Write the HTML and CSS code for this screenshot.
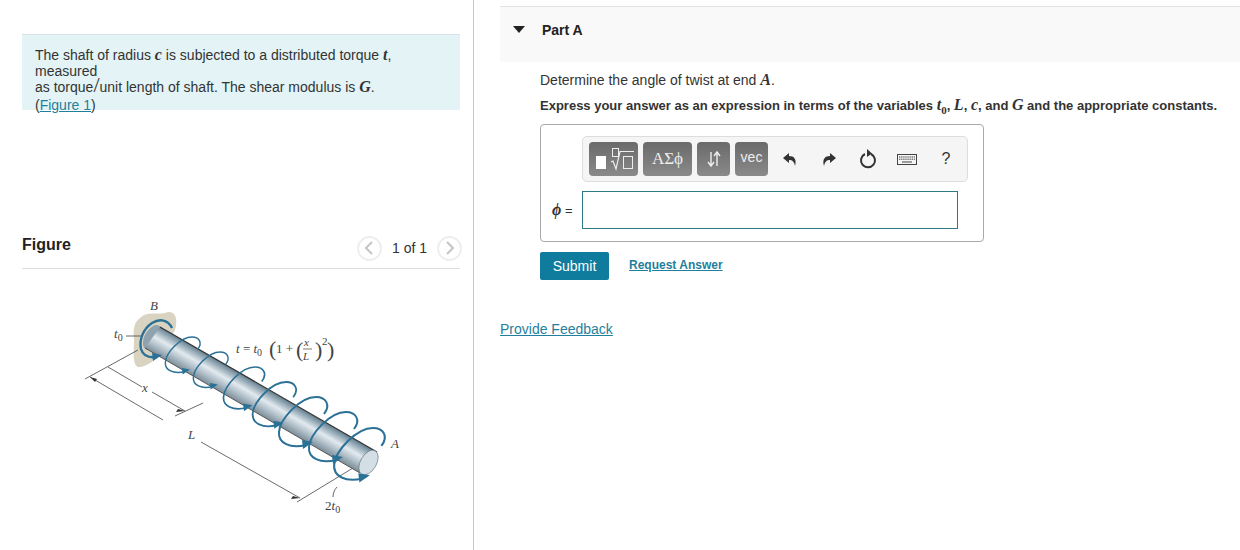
FILE: index.html
```html
<!DOCTYPE html>
<html lang="en">
<head>
    <meta charset="UTF-8">
    <meta name="viewport" content="width=device-width, initial-scale=1.0">
    <title>Part A - Angle of Twist</title>
    <link rel="stylesheet" href="styles.css">
</head>
<body>

    <div class="left-pane">
        <div class="intro">
            The shaft of radius <span class="math">c</span> is subjected to a distributed torque <span class="math">t</span>, measured<br>
            as torque<span class="slash">/</span>unit length of shaft. The shear modulus is <span class="math">G</span>.
            <div class="figure-ref">(<a href="#">Figure 1</a>)</div>
        </div>

        <div class="figure-head">
            <h2>Figure</h2>
            <div class="pager">
                <span class="pager-btn">
                    <svg width="10" height="14" viewBox="0 0 10 14"><path d="M8 1 L2 7 L8 13" fill="none" stroke="#c4c4c4" stroke-width="2"/></svg>
                </span>
                <span class="pager-text">1 of 1</span>
                <span class="pager-btn">
                    <svg width="10" height="14" viewBox="0 0 10 14"><path d="M2 1 L8 7 L2 13" fill="none" stroke="#c4c4c4" stroke-width="2"/></svg>
                </span>
            </div>
        </div>

        <svg class="shaft-figure" width="340" height="230" viewBox="70 290 340 230">
            <defs>
                <linearGradient id="shaftFill" gradientUnits="userSpaceOnUse" x1="160" y1="327" x2="147.5" y2="348.6">
                    <stop offset="0" stop-color="#66808f"/>
                    <stop offset="0.15" stop-color="#90a5b2"/>
                    <stop offset="0.45" stop-color="#e2eaef"/>
                    <stop offset="0.75" stop-color="#aebdc7"/>
                    <stop offset="1" stop-color="#82949f"/>
                </linearGradient>
                <g id="ring">
                    <path d="M8 17 C15 8 10 0 0 0 C-16 0 -36 22 -37 35 C-38 46 -26 52 -10 48" fill="none" stroke="#2b7196" stroke-width="2"/>
                    <polygon points="-3,45 -14,43 -13,52" fill="#2b7196"/>
                </g>
            </defs>

            <path d="M140 318 C148 310 160 316 168 312 C176 311 178 320 175 330 L162 352 C158 358 146 368 138 367 C132 364 134 350 134 340 C133 330 134 322 140 318 Z" fill="#d9d3c2"/>

            <!-- dimension lines -->
            <g fill="none" stroke="#444" stroke-width="0.8">
                <path d="M138 350 L85 379"/>
                <path d="M108 367 L142 387 M152 392 L185 411"/>
                <path d="M175 416 L203 403"/>
                <path d="M90 377 L163 420 M201 442 L300 498"/>
                <path d="M297 502 L353 468"/>
                <path d="M337 487 C334 490 333 494 333 497"/>
                <path d="M126 336 L141 336"/>
            </g>
            <polygon points="185,411 178,409 176,412" fill="#333"/>
            <polygon points="90,377 97,379 95,382" fill="#333"/>
            <polygon points="300,498 293,496 291,499" fill="#333"/>

            <!-- shaft -->
            <ellipse cx="152.5" cy="337.5" rx="8" ry="13.5" transform="rotate(30 152.5 337.5)" fill="#8fa3af"/>
            <polygon points="160,327 377,452 360,473 145,348" fill="url(#shaftFill)"/>
            <path d="M160 327 L377 452" stroke="#333" stroke-width="1.2"/>
            <path d="M145 348 L360 473" stroke="#555" stroke-width="1"/>
            <ellipse cx="368.5" cy="462.5" rx="8" ry="13.5" transform="rotate(30 368.5 462.5)" fill="#d3dee5" stroke="#5d6d77" stroke-width="0.6"/>

            <!-- torque rings -->
            <path d="M172 328 C168 320 160 318 152 323 C143 329 139 340 141 349 C143 356 149 358 157 357" fill="none" stroke="#2b7196" stroke-width="2.4"/>
            <polygon points="162,355 152,353 153,361" fill="#2b7196"/>
            <use href="#ring" transform="translate(192 337) scale(.72)"/>
            <use href="#ring" transform="translate(220 352) scale(.72)"/>
            <use href="#ring" transform="translate(255 367) scale(.85)"/>
            <use href="#ring" transform="translate(286 382) scale(.9)"/>
            <use href="#ring" transform="translate(316 397)"/>
            <use href="#ring" transform="translate(346 412)"/>
            <use href="#ring" transform="translate(373 428) scale(1.05)"/>

            <!-- labels -->
            <g class="fig-label">
                <text x="150" y="310">B</text>
                <text x="114" y="338">t<tspan class="fig-sub" dy="3">0</tspan></text>
                <text x="142" y="392">x</text>
                <text x="188" y="439">L</text>
                <text x="391" y="448">A</text>
                <text x="325" y="510" class="fig-plain">2<tspan class="fig-italic">t</tspan><tspan class="fig-sub" dy="3">0</tspan></text>
                <text x="236" y="353">t<tspan class="fig-plain"> = </tspan>t<tspan class="fig-sub" dy="3">0</tspan></text>
                <text x="269" y="356" class="fig-paren">(</text>
                <text x="276" y="353" class="fig-plain">1 +</text>
                <text x="296" y="357" class="fig-paren">(</text>
                <text x="304" y="346" class="fig-small">x</text>
                <path d="M303 349 H312" stroke="#444" stroke-width="0.7"/>
                <text x="303" y="360" class="fig-small">L</text>
                <text x="315" y="357" class="fig-paren">)</text>
                <text x="322" y="345" class="fig-small fig-plain">2</text>
                <text x="327" y="357" class="fig-paren">)</text>
            </g>
        </svg>
    </div>

    <div class="right-pane">
        <div class="part-head">
            <svg class="part-arrow" width="12" height="7" viewBox="0 0 12 7"><polygon points="0,0 12,0 6,7" fill="#222"/></svg>
            <h3>Part A</h3>
        </div>

        <div class="part-body">
            <p class="question">Determine the angle of twist at end <span class="math">A</span>.</p>
            <p class="express">Express your answer as an expression in terms of the variables <span class="math">t</span><sub class="math-sub">0</sub>, <span class="math">L</span>, <span class="math">c</span>, and <span class="math">G</span> and the appropriate constants.</p>

            <div class="answer-box">
                <div class="toolbar">
                    <span class="tool-btn wide">
                        <svg width="49" height="34" viewBox="0 0 49 34">
                            <rect x="7" y="14" width="10" height="13" fill="#fff"/>
                            <rect x="23.5" y="6.5" width="6" height="8" fill="none" stroke="#eee"/>
                            <path d="M22 20 L24 19 L27 27 L31 9.5 H45" fill="none" stroke="#eee" stroke-width="1.2"/>
                            <rect x="34.5" y="14.5" width="9" height="12" fill="none" stroke="#eee"/>
                        </svg>
                    </span>
                    <span class="tool-btn wide greek">ΑΣϕ</span>
                    <span class="tool-btn narrow">
                        <svg width="16" height="18" viewBox="0 0 16 18">
                            <path d="M5 2 V15 M2 12 L5 16 L8 12 M11 16 V3 M8 6 L11 2 L14 6" fill="none" stroke="#eee" stroke-width="1.4"/>
                        </svg>
                    </span>
                    <span class="tool-btn narrow vec">vec</span>
                    <span class="tool-icon first">
                        <svg width="16" height="16" viewBox="0 0 16 16"><path d="M7 2 L1 7 L7 12 V9 C10 9 12 10 13 15 C15 8 12 5 7 5 Z" fill="#333"/></svg>
                    </span>
                    <span class="tool-icon">
                        <svg class="flip" width="16" height="16" viewBox="0 0 16 16"><path d="M7 2 L1 7 L7 12 V9 C10 9 12 10 13 15 C15 8 12 5 7 5 Z" fill="#333"/></svg>
                    </span>
                    <span class="tool-icon">
                        <svg width="18" height="20" viewBox="0 0 18 20"><path d="M6 5 A7 7 0 1 0 12 5" fill="none" stroke="#333" stroke-width="2"/><polygon points="8,0 13,4.5 8,8" fill="#333"/></svg>
                    </span>
                    <span class="tool-icon">
                        <svg width="20" height="11" viewBox="0 0 20 11">
                            <rect x="0.5" y="0.5" width="19" height="10" fill="#f5f5f5" stroke="#444"/>
                            <path d="M2 3 H18 M2 5.2 H18" stroke="#444" stroke-dasharray="1.4 .7"/>
                            <path d="M5 8 H15" stroke="#444"/>
                        </svg>
                    </span>
                    <span class="tool-icon help">?</span>
                </div>
                <div class="answer-row">
                    <span class="answer-label"><span class="math">ϕ</span> =</span>
                    <div class="answer-input"></div>
                </div>
            </div>

            <div class="actions">
                <button class="submit">Submit</button>
                <a class="request" href="#">Request Answer</a>
            </div>
        </div>

        <a class="feedback" href="#">Provide Feedback</a>
    </div>

</body>
</html>
```

FILE: styles.css
```css
/* General Styling */
body {
    font-family: 'Liberation Sans', Arial, sans-serif;
    font-size: 14px;
    color: #333;
    background: #fff;
    margin: 0;
    height: 550px;
    overflow: hidden;
    display: flex;
}
a {
    color: #1f7f9c;
}
.math {
    font-family: 'Liberation Serif', serif;
    font-style: italic;
    font-weight: bold;
    font-size: 16px;
    line-height: 0;
}
.math-sub {
    font-family: 'Liberation Serif', serif;
    font-size: 11px;
    line-height: 0;
}

/* Left pane */
.left-pane {
    width: 473px;
    flex-shrink: 0;
    box-sizing: border-box;
    border-right: 1px solid #b9cbd6;
    width: 474px;
    padding: 34px 13px 0 22px;
}
.intro {
    background: #e4f4f6;
    border-top: 1px solid #d5e3e6;
    padding: 12px 13px 12px;
    height: 76px;
    box-sizing: border-box;
    line-height: 16px;
}
.slash {
    font-family: 'Liberation Serif', serif;
    font-size: 22px;
    font-weight: normal;
    line-height: 0;
}
.figure-ref {
    margin-top: 2px;
}
.figure-head {
    display: flex;
    justify-content: space-between;
    align-items: center;
    margin-top: 124px;
    height: 34px;
    border-bottom: 1px solid #ddd;
}
.figure-head h2 {
    font-size: 16px;
    margin: 0 0 12px;
    color: #222;
}
.pager {
    display: flex;
    align-items: center;
    gap: 10px;
    margin: 0 -2px 6px 0;
}
.pager-btn {
    width: 21px;
    height: 21px;
    border: 2px solid #eee;
    border-radius: 50%;
    display: flex;
    align-items: center;
    justify-content: center;
}
.shaft-figure {
    display: block;
    margin: 21px 0 0 48px;
}
.fig-label text {
    font-family: 'Liberation Serif', serif;
    font-style: italic;
    font-size: 13px;
    fill: #444;
}
.fig-label .fig-plain,
.fig-label .fig-plain tspan.fig-sub {
    font-style: normal;
}
.fig-label .fig-italic {
    font-style: italic;
}
.fig-label .fig-sub {
    font-style: normal;
    font-size: 10px;
}
.fig-label .fig-small {
    font-size: 11px;
}
.fig-label .fig-paren {
    font-style: normal;
    font-size: 22px;
    font-weight: lighter;
}

/* Right pane */
.right-pane {
    flex: 1;
    padding: 6px 0 0 26px;
    min-width: 0;
}
.part-head {
    display: flex;
    align-items: center;
    height: 56px;
    background: #f9f9f9;
    border-top: 1px solid #e3e3e3;
    box-sizing: border-box;
    padding-bottom: 10px;
}
.part-arrow {
    margin-left: 13px;
}
.part-head h3 {
    font-size: 14px;
    margin: 0 0 0 17px;
    color: #222;
}
.part-body {
    padding-left: 40px;
}
.question {
    margin: 10px 0 0;
    line-height: 16px;
}
.express {
    margin: 10px 0 0;
    font-size: 13px;
    font-weight: bold;
    line-height: 16px;
    white-space: nowrap;
}
.answer-box {
    width: 444px;
    height: 118px;
    box-sizing: border-box;
    border: 1px solid #aaa;
    border-radius: 4px;
    margin-top: 10px;
    padding: 11px 15px 0 41px;
}
.toolbar {
    display: flex;
    align-items: center;
    height: 46px;
    box-sizing: border-box;
    background: #f5f5f5;
    border: 1px solid #ddd;
    border-radius: 5px;
    padding-left: 6px;
    gap: 5px;
}
.tool-btn {
    height: 34px;
    background: linear-gradient(#6a6a6a, #8a8a8a);
    border-radius: 4px;
    color: #eee;
    display: flex;
    align-items: center;
    justify-content: center;
}
.wide {
    width: 49px;
}
.narrow {
    width: 33px;
}
.greek {
    font-family: 'Liberation Serif', serif;
    font-size: 17px;
}
.vec {
    font-size: 14px;
    padding-bottom: 4px;
    height: 30px;
}
.tool-icon {
    width: 34px;
    display: flex;
    justify-content: center;
    color: #333;
}
.tool-icon.first {
    margin-left: 0;
}
.tool-icon + .tool-icon {
    margin-left: 0;
}
.flip {
    transform: scaleX(-1);
}
.help {
    font-size: 16px;
}
.answer-row {
    display: flex;
    align-items: center;
    margin-top: 9px;
    margin-left: -30px;
}
.answer-label {
    width: 30px;
    font-size: 13px;
    white-space: nowrap;
}
.answer-input {
    width: 376px;
    height: 38px;
    box-sizing: border-box;
    border: 1px solid #2f7a87;
    background: #fff;
}
.actions {
    display: flex;
    align-items: center;
    margin-top: 10px;
}
.submit {
    width: 69px;
    height: 28px;
    background: #0f7c9e;
    color: #fff;
    border: none;
    border-radius: 2px;
    font-family: inherit;
    font-size: 14px;
    padding: 0;
}
.request {
    margin: 0 0 2px 20px;
    font-size: 12px;
    font-weight: bold;
}
.feedback {
    display: inline-block;
    margin-top: 41px;
}
```
